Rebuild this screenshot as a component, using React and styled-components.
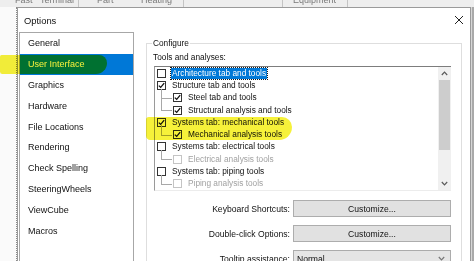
import React from 'react';
import styled, { createGlobalStyle } from 'styled-components';

const GlobalStyle = createGlobalStyle`
  html, body { margin: 0; padding: 0; background: #ffffff; }
  body { font-family: "Liberation Sans", Arial, sans-serif; }
`;

const Page = styled.div`
  position: relative;
  width: 474px;
  height: 261px;
  overflow: hidden;
  background: #ffffff;
`;

const TopStrip = styled.div`
  display: flex;
  align-items: flex-end;
  height: 7px;
  overflow: hidden;
  background: #eeeeee;
  color: #7a7a7a;
  font-size: 9px;
  line-height: 10px;
`;

const StripCell = styled.div`
  flex: none;
  width: ${p => p.$w}px;
  padding-left: ${p => p.$pad || 0}px;
  box-sizing: border-box;
  border-right: ${p => (p.$sep ? '1px solid #c4c4c4' : 'none')};
  height: 12px;
  white-space: nowrap;
`;

const Main = styled.div`
  display: flex;
  height: 254px;
`;

const Gutter = styled.div`
  flex: none;
  width: 16px;
  border-right: 1px dotted #8a8a8a;
  background: #fafafa;
`;

const Dialog = styled.div`
  flex: none;
  width: 452px;
  border: 1px solid #9a9a9a;
  border-bottom: none;
  background: #ffffff;
  display: flex;
  flex-direction: column;
`;

const SideShade = styled.div`
  flex: 1;
  background: linear-gradient(to right, #d6d6d6 0, #d6d6d6 1px, #a9a9a9 1px);
`;

const TitleBar = styled.div`
  display: flex;
  align-items: center;
  justify-content: space-between;
  height: 24px;
  padding: 0 6px 0 6px;
  font-size: 9.4px;
  color: #111;
`;

const Body = styled.div`
  display: flex;
  flex: 1;
  min-height: 0;
`;

const Nav = styled.div`
  flex: none;
  width: 115px;
  margin-left: 1px;
  box-sizing: border-box;
  border: 1px solid #a7a7a7;
  border-bottom: none;
  background: #fff;
  display: flex;
  flex-direction: column;
`;

const NavItem = styled.div`
  height: 20.8px;
  display: flex;
  align-items: center;
  padding-left: 8px;
  font-size: 9px;
  color: ${p => (p.$active ? '#fff' : '#111')};
  background: ${p => (p.$active ? '#0078d7' : 'transparent')};
`;

const Content = styled.div`
  flex: 1;
  padding: 6px 8px 0 12px;
  min-width: 0;
`;

const Group = styled.fieldset`
  margin: 0;
  padding: 0 10px 0 6px;
  border: 1px solid #dedede;
  border-bottom: none;
  height: 260px;
  font-size: 8.3px;
  color: #111;
`;

const Legend = styled.legend`
  padding: 0 1px;
  margin-left: -1px;
  line-height: 11px;
`;

const Caption = styled.div`
  line-height: 11px;
  margin-top: 3px;
  margin-left: 0;
`;

const ListBox = styled.div`
  display: flex;
  margin-top: 3px;
  margin-left: 1px;
  height: 125px;
  box-sizing: border-box;
  border-top: 1px solid #7d7d7d;
  border-left: 1px solid #9a9a9a;
  border-bottom: 1px solid #ececec;
  background: #fff;
`;

const Tree = styled.div`
  flex: 1;
  padding-left: 2px;
  display: flex;
  flex-direction: column;
`;

const Row = styled.div`
  display: flex;
  align-items: center;
  height: 12.45px;
  padding-left: ${p => (p.$child ? 4 : 0)}px;
  color: ${p => (p.$disabled ? '#a2a2a2' : '#111')};
  white-space: nowrap;
`;

const Elbow = styled.span`
  position: relative;
  flex: none;
  width: 12px;
  align-self: stretch;
  &::before {
    content: '';
    position: absolute;
    left: 0;
    top: -3px;
    height: ${p => (p.$last ? 'calc(50% + 3px)' : 'calc(100% + 3px)')};
    border-left: 1px solid #a8a8a8;
  }
  &::after {
    content: '';
    position: absolute;
    left: 0;
    top: 50%;
    width: 11px;
    border-top: 1px solid #a8a8a8;
  }
`;

const Box = styled.span`
  flex: none;
  width: 9px;
  height: 9px;
  box-sizing: border-box;
  border: 1px solid ${p => (p.$disabled ? '#c4c4c4' : '#333')};
  background: #fff;
  margin-right: 6px;
  display: flex;
  align-items: center;
  justify-content: center;
`;

const Label = styled.span`
  line-height: 11px;
  padding: 0 1px;
  margin-left: -1px;
  background: ${p => (p.$selected ? '#0078d7' : 'transparent')};
  color: ${p => (p.$selected ? '#fff' : 'inherit')};
  outline: ${p => (p.$selected ? '1px dotted #1a1a1a' : 'none')};
`;

const ScrollBar = styled.div`
  flex: none;
  width: 13px;
  background: #f0f0f0;
  display: flex;
  flex-direction: column;
`;

const ScrollArrow = styled.div`
  height: 13px;
  display: flex;
  align-items: center;
  justify-content: center;
`;

const Thumb = styled.div`
  height: 70px;
  margin: 0 1px;
  background: #cdcdcd;
`;

const Track = styled.div`
  flex: 1;
`;

const Settings = styled.div`
  display: grid;
  grid-template-columns: 1fr 158px;
  column-gap: 3px;
  row-gap: 8px;
  margin-top: 9px;
  align-items: center;
`;

const SettingLabel = styled.div`
  text-align: right;
  white-space: nowrap;
  font-size: 8.6px;
`;

const Button = styled.div`
  height: 17px;
  box-sizing: border-box;
  border: 1px solid #adadad;
  background: #e1e1e1;
  display: flex;
  align-items: center;
  justify-content: center;
  font-size: 8.6px;
  color: #111;
`;

const Select = styled(Button)`
  justify-content: space-between;
  padding: 0 5px 0 3px;
  background: #e5e5e5;
  border-color: #acacac;
`;

const Highlight = styled.div`
  position: absolute;
  left: ${p => p.$x}px;
  top: ${p => p.$y}px;
  width: ${p => p.$w}px;
  height: ${p => p.$h}px;
  background: #f6f13a;
  mix-blend-mode: multiply;
  border-radius: ${p => p.$r};
  pointer-events: none;
`;

const Check = () => (
  <svg width="7" height="7" viewBox="0 0 7 7">
    <polyline points="0.8,3.6 2.7,5.4 6.2,1.2" fill="none" stroke="#111" strokeWidth="1.3" />
  </svg>
);

const Chevron = ({ up, color = '#5a5a5a' }) => (
  <svg width="7" height="5" viewBox="0 0 7 5">
    <polyline
      points={up ? '0.8,4 3.5,1.2 6.2,4' : '0.8,1 3.5,3.8 6.2,1'}
      fill="none"
      stroke={color}
      strokeWidth="1.2"
    />
  </svg>
);

const CloseIcon = () => (
  <svg width="10" height="10" viewBox="0 0 10 10">
    <path d="M1 1 L9 9 M9 1 L1 9" stroke="#222" strokeWidth="1" />
  </svg>
);

const navItems = [
  'General',
  'User Interface',
  'Graphics',
  'Hardware',
  'File Locations',
  'Rendering',
  'Check Spelling',
  'SteeringWheels',
  'ViewCube',
  'Macros',
];

const tree = [
  { text: 'Architecture tab and tools', checked: false, selected: true },
  { text: 'Structure tab and tools', checked: true },
  { text: 'Steel tab and tools', checked: true, child: true },
  { text: 'Structural analysis and tools', checked: true, child: true, last: true },
  { text: 'Systems tab: mechanical tools', checked: true },
  { text: 'Mechanical analysis tools', checked: true, child: true, last: true },
  { text: 'Systems tab: electrical tools', checked: false },
  { text: 'Electrical analysis tools', checked: false, child: true, last: true, disabled: true },
  { text: 'Systems tab: piping tools', checked: false },
  { text: 'Piping analysis tools', checked: false, child: true, last: true, disabled: true },
];

export default function App() {
  return (
    <Page>
      <GlobalStyle />
      <TopStrip>
        <StripCell $w={79} $pad={15} $sep>Fast&nbsp;&nbsp;&nbsp;Terminal</StripCell>
        <StripCell $w={105} $pad={18} $sep>Part&nbsp;&nbsp;&nbsp;&nbsp;&nbsp;&nbsp;&nbsp;&nbsp;&nbsp;&nbsp;&nbsp;Heating</StripCell>
        <StripCell $w={99} $sep />
        <StripCell $w={65} $pad={10} $sep>Equipment</StripCell>
        <StripCell $w={126} />
      </TopStrip>
      <Main>
        <Gutter />
        <Dialog>
          <TitleBar>
            <span>Options</span>
            <CloseIcon />
          </TitleBar>
          <Body>
            <Nav>
              {navItems.map((n, i) => (
                <NavItem key={n} $active={i === 1}>{n}</NavItem>
              ))}
            </Nav>
            <Content>
              <Group>
                <Legend>Configure</Legend>
                <Caption>Tools and analyses:</Caption>
                <ListBox>
                  <Tree>
                    {tree.map(t => (
                      <Row key={t.text} $child={t.child} $disabled={t.disabled}>
                        {t.child && <Elbow $last={t.last} />}
                        <Box $disabled={t.disabled}>{t.checked && <Check />}</Box>
                        <Label $selected={t.selected}>{t.text}</Label>
                      </Row>
                    ))}
                  </Tree>
                  <ScrollBar>
                    <ScrollArrow><Chevron up /></ScrollArrow>
                    <Thumb />
                    <Track />
                    <ScrollArrow><Chevron /></ScrollArrow>
                  </ScrollBar>
                </ListBox>
                <Settings>
                  <SettingLabel>Keyboard Shortcuts:</SettingLabel>
                  <Button>Customize...</Button>
                  <SettingLabel>Double-click Options:</SettingLabel>
                  <Button>Customize...</Button>
                  <SettingLabel>Tooltip assistance:</SettingLabel>
                  <Select>
                    <span>Normal</span>
                    <Chevron color="#777" />
                  </Select>
                </Settings>
              </Group>
            </Content>
          </Body>
        </Dialog>
        <SideShade />
      </Main>
      <Highlight $x={0} $y={55} $w={107} $h={19} $r="2px 10px 14px 3px" />
      <Highlight $x={146} $y={117} $w={146} $h={23} $r="4px 14px 18px 6px" />
    </Page>
  );
}
